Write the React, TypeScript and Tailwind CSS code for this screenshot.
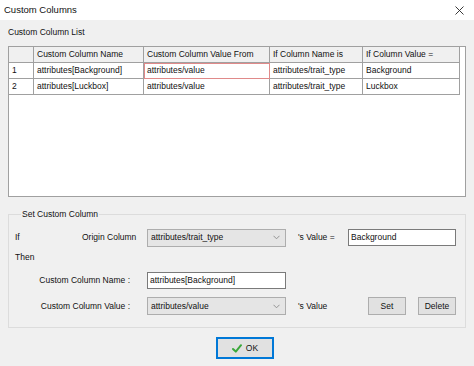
import React from "react";

const font = { fontFamily: '"Liberation Sans", Arial, sans-serif' };

function Combo({ value, w }: { value: string; w: string }) {
  return (
    <div className={`${w} h-[18px] flex items-center justify-between border border-[#adadad] bg-[#e5e5e5] pl-[3px] pr-[5px]`}>
      <span className="text-[8.5px] text-[#111]">{value}</span>
      <svg width="7" height="5" viewBox="0 0 7 5">
        <path d="M0.5 0.8 L3.5 3.8 L6.5 0.8" fill="none" stroke="#8a8a8a" strokeWidth="0.9" />
      </svg>
    </div>
  );
}

function TextBox({ value, w }: { value: string; w: string }) {
  return (
    <div className={`${w} h-[17px] flex items-center border border-[#7a7a7a] bg-white pl-[2px]`}>
      <span className="text-[8.5px] text-[#111]">{value}</span>
    </div>
  );
}

const cols = ["w-[25px]", "w-[110px]", "w-[126px]", "w-[93px]", "w-[97px]"];

function Row({ cells, header, sel }: { cells: string[]; header?: boolean; sel?: number }) {
  return (
    <div className="flex h-[16px]">
      {cells.map((c, i) => (
        <div
          key={i}
          className={`${cols[i]} h-[16px] flex items-center pl-[3px] border-r border-b border-[#a0a0a0] ${
            header ? "bg-[#f0f0f0]" : "bg-white"
          } ${sel === i ? "outline outline-1 outline-[#e08a8a] -outline-offset-1" : ""}`}
        >
          <span className="text-[8.5px] text-[#111] whitespace-nowrap">{c}</span>
        </div>
      ))}
    </div>
  );
}

export default function App() {
  return (
    <div className="w-[474px] h-[366px] bg-[#f0f0f0] flex flex-col" style={font}>
      <div className="h-[20px] bg-white flex items-center justify-between pl-[4px] pr-[10px]">
        <span className="text-[9.5px] text-[#111]">Custom Columns</span>
        <svg width="9" height="9" viewBox="0 0 9 9">
          <path d="M0.5 0.5 L8.5 8.5 M8.5 0.5 L0.5 8.5" stroke="#222" strokeWidth="0.9" />
        </svg>
      </div>
      <div className="px-[8px]">
        <div className="mt-[6px] h-[12px] flex items-center text-[8.5px] text-[#111]">Custom Column List</div>
        <div className="mt-[8px] w-[458px] h-[151px] border border-[#a0a0a0] bg-white">
          <Row header cells={["", "Custom Column Name", "Custom Column Value From", "If Column Name is", "If Column Value ="]} />
          <Row sel={2} cells={["1", "attributes[Background]", "attributes/value", "attributes/trait_type", "Background"]} />
          <Row cells={["2", "attributes[Luckbox]", "attributes/value", "attributes/trait_type", "Luckbox"]} />
        </div>
        <fieldset className="mt-[11px] w-[458px] border border-[#dcdcdc] pl-[6px] pb-[12px]">
          <legend className="ml-[6px] px-[1px] text-[8.5px] text-[#111] leading-[12px]">Set Custom Column</legend>
          <div className="mt-[8px] flex items-center h-[19px]">
            <span className="w-[67px] text-[8.5px] text-[#111]">If</span>
            <span className="w-[65px] text-[8.5px] text-[#111]">Origin Column</span>
            <Combo value="attributes/trait_type" w="w-[139px]" />
            <span className="ml-[12px] w-[50px] text-[8.5px] text-[#111]">'s Value =</span>
            <TextBox value="Background" w="w-[108px]" />
          </div>
          <div className="mt-[4px] h-[12px] flex items-center text-[8.5px] text-[#111]">Then</div>
          <div className="mt-[9px] flex items-center h-[17px]">
            <span className="w-[132px] pr-[17px] text-right text-[8.5px] text-[#111]">Custom Column Name :</span>
            <TextBox value="attributes[Background]" w="w-[139px]" />
          </div>
          <div className="mt-[8px] flex items-center h-[18px]">
            <span className="w-[132px] pr-[17px] text-right text-[8.5px] text-[#111]">Custom Column Value :</span>
            <Combo value="attributes/value" w="w-[139px]" />
            <span className="ml-[12px] w-[70px] text-[8.5px] text-[#111]">'s Value</span>
            <button className="w-[38px] h-[18px] border border-[#adadad] bg-[#e1e1e1] text-[8.5px] text-[#111]">Set</button>
            <button className="ml-[12px] w-[38px] h-[18px] border border-[#adadad] bg-[#e1e1e1] text-[8.5px] text-[#111]">Delete</button>
          </div>
        </fieldset>
      </div>
      <div className="mt-[9px] pl-[216px]">
        <button className="w-[58px] h-[22px] border-2 border-[#0078d7] bg-[#e1e1e1] flex items-center justify-center gap-[4px]">
          <svg width="10" height="9" viewBox="0 0 10 9">
            <path d="M1 5 L3.8 7.6 L9 1.2" fill="none" stroke="#3aa83a" strokeWidth="2" strokeLinecap="round" strokeLinejoin="round" />
          </svg>
          <span className="text-[8.5px] text-[#111]">OK</span>
        </button>
      </div>
    </div>
  );
}
